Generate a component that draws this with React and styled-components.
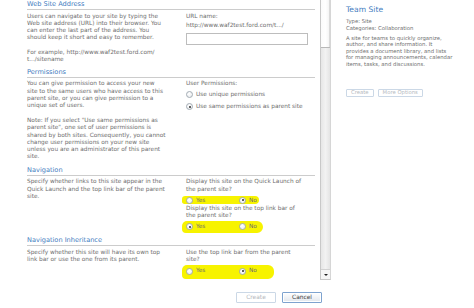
import React from "react";
import styled, { createGlobalStyle } from "styled-components";

const GlobalStyle = createGlobalStyle`
  html, body {
    margin: 0;
    padding: 0;
    background: #ffffff;
  }
  body {
    font-family: "DejaVu Sans", Verdana, sans-serif;
    color: #6e6e6e;
  }
`;

const Page = styled.div`
  width: 474px;
  height: 308px;
  overflow: hidden;
  display: flex;
  flex-direction: column;
`;

const Main = styled.div`
  display: flex;
  height: 280px;
`;

const FormPane = styled.div`
  width: 288px;
  padding: 0 5px 0 27px;
  overflow: hidden;
`;

const Section = styled.div`
  margin-bottom: ${(p) => p.$after || 4}px;
`;

const SectionTitle = styled.div`
  font-size: 6.6px;
  line-height: 9px;
  color: #3f7cc0;
  border-bottom: 1px solid #cccccc;
  margin-bottom: 2.5px;
`;

const SectionBody = styled.div`
  display: grid;
  grid-template-columns: 149px 1fr;
  column-gap: 10px;
`;

const Desc = styled.div`
  font-size: 5.8px;
  line-height: 7.3px;
  white-space: nowrap;

  p {
    margin: 0 0 7.5px;
  }
  p:last-child {
    margin: 0;
  }
`;

const Controls = styled.div`
  font-size: 5.8px;
  line-height: 7.3px;
  white-space: nowrap;
`;

const Label = styled.div`
  margin-top: ${(p) => p.$top || 0}px;
`;

const UrlInput = styled.div`
  margin-top: 4px;
  width: 120px;
  height: 10px;
  border: 1px solid #bdbdbd;
  background: #fff;
`;

const RadioRow = styled.div`
  position: relative;
  display: flex;
  align-items: center;
  height: ${(p) => p.$h || 9}px;
  margin-top: ${(p) => p.$top || 3}px;
`;

const Marker = styled.span`
  position: absolute;
  left: -4px;
  width: ${(p) => p.$w}px;
  top: ${(p) => p.$t}px;
  bottom: ${(p) => p.$b}px;
  background: #f7f300;
  border-radius: 5px 6px 6px 4px;
  filter: blur(0.4px);
`;

const Option = styled.label`
  position: relative;
  display: flex;
  align-items: center;
  gap: 3px;
  width: ${(p) => (p.$w ? `${p.$w}px` : "auto")};
`;

const Radio = styled.span`
  width: 5px;
  height: 5px;
  border-radius: 50%;
  border: 1px solid #a3acb4;
  background: radial-gradient(circle at 40% 35%, #ffffff 0%, #e6e9ec 100%);
  display: flex;
  align-items: center;
  justify-content: center;

  &::after {
    content: "";
    width: 2px;
    height: 2px;
    border-radius: 50%;
    background: ${(p) => (p.$on ? "#2b2b2b" : "transparent")};
  }
`;

const Scrollbar = styled.div`
  width: 11px;
  height: 280px;
  border-left: 1px solid #c8c8c8;
  border-right: 1px solid #d6d6d6;
  border-bottom: 1px solid #c8c8c8;
  background: linear-gradient(to right, #e6e6e6, #f2f2f2 50%, #e4e4e4);
  display: flex;
  flex-direction: column;
  justify-content: space-between;
  box-sizing: border-box;
`;

const Thumb = styled.div`
  height: 47px;
  background: linear-gradient(to right, #fbfbfb, #ffffff 50%, #f2f2f2);
  border-bottom: 1px solid #b8b8b8;
  box-shadow: inset -1px 0 0 #dadada;
`;

const ArrowButton = styled.div`
  height: 9px;
  border-top: 1px solid #d2d2d2;
  background: #f6f6f6;
  display: flex;
  align-items: center;
  justify-content: center;

  &::after {
    content: "";
    border-left: 2px solid transparent;
    border-right: 2px solid transparent;
    border-top: 2px solid #222;
  }
`;

const SidePanel = styled.div`
  flex: 1;
  padding: 5px 0 0 15px;
  white-space: nowrap;
`;

const SideTitle = styled.div`
  font-size: 7.6px;
  line-height: 10px;
  color: #3f7cc0;
  margin-bottom: 3px;
`;

const SideText = styled.div`
  font-size: 5.3px;
  line-height: 6.5px;
  margin-bottom: 3.5px;
`;

const SideButtons = styled.div`
  display: flex;
  gap: 4px;
  margin-top: 22px;
`;

const Button = styled.button`
  font-family: "DejaVu Sans", Verdana, sans-serif;
  font-size: ${(p) => (p.$small ? 5.3 : 5.9)}px;
  height: ${(p) => (p.$small ? 8 : 11)}px;
  padding: 0 ${(p) => (p.$small ? 4 : 0)}px;
  width: ${(p) => (p.$w ? `${p.$w}px` : "auto")};
  line-height: 1;
  border-radius: 1px;
  color: ${(p) => (p.disabled ? "#b4b8bd" : "#3d3d3d")};
  border: 1px solid ${(p) => (p.disabled ? "#cbd8e6" : "#7ea3cf")};
  background: ${(p) =>
    p.disabled
      ? "#ffffff"
      : "linear-gradient(to bottom, #ffffff, #eef1f5 55%, #e1e6ec)"};
  box-shadow: ${(p) => (p.disabled ? "none" : "inset 0 0 0 1px #ffffff")};
`;

const Footer = styled.div`
  display: flex;
  justify-content: flex-end;
  gap: 6px;
  padding: 12px 152px 0 0;
`;

const YesNo = ({ yes, w, t, b, top }) => (
  <RadioRow $top={top}>
    <Marker $w={w} $t={t} $b={b} />
    <Option $w={53}>
      <Radio $on={yes} />
      Yes
    </Option>
    <Option>
      <Radio $on={!yes} />
      No
    </Option>
  </RadioRow>
);

export default function App() {
  return (
    <Page>
      <GlobalStyle />
      <Main>
        <FormPane>
          <Section $after={4}>
            <SectionTitle>Web Site Address</SectionTitle>
            <SectionBody>
              <Desc>
                <p>
                  Users can navigate to your site by typing the
                  <br />
                  Web site address (URL) into their browser. You
                  <br />
                  can enter the last part of the address. You
                  <br />
                  should keep it short and easy to remember.
                </p>
                <p>
                  For example, http://www.waf2test.ford.com/
                  <br />
                  t.../sitename
                </p>
              </Desc>
              <Controls>
                <Label>URL name:</Label>
                <Label $top={2}>http://www.waf2test.ford.com/t.../</Label>
                <UrlInput />
              </Controls>
            </SectionBody>
          </Section>

          <Section $after={5}>
            <SectionTitle>Permissions</SectionTitle>
            <SectionBody>
              <Desc>
                <p>
                  You can give permission to access your new
                  <br />
                  site to the same users who have access to this
                  <br />
                  parent site, or you can give permission to a
                  <br />
                  unique set of users.
                </p>
                <p>
                  Note: If you select "Use same permissions as
                  <br />
                  parent site", one set of user permissions is
                  <br />
                  shared by both sites. Consequently, you cannot
                  <br />
                  change user permissions on your new site
                  <br />
                  unless you are an administrator of this parent
                  <br />
                  site.
                </p>
              </Desc>
              <Controls>
                <Label>User Permissions:</Label>
                <RadioRow $h={10} $top={2}>
                  <Option>
                    <Radio />
                    Use unique permissions
                  </Option>
                </RadioRow>
                <RadioRow $h={10} $top={2}>
                  <Option>
                    <Radio $on />
                    Use same permissions as parent site
                  </Option>
                </RadioRow>
              </Controls>
            </SectionBody>
          </Section>

          <Section $after={5}>
            <SectionTitle>Navigation</SectionTitle>
            <SectionBody>
              <Desc>
                <p>
                  Specify whether links to this site appear in the
                  <br />
                  Quick Launch and the top link bar of the parent
                  <br />
                  site.
                </p>
              </Desc>
              <Controls>
                <Label>
                  Display this site on the Quick Launch of
                  <br />
                  the parent site?
                </Label>
                <YesNo yes={false} w={77} t={0} b={1} />
                <Label>
                  Display this site on the top link bar of
                  <br />
                  the parent site?
                </Label>
                <YesNo yes w={81} t={-1} b={-2} />
              </Controls>
            </SectionBody>
          </Section>

          <Section>
            <SectionTitle>Navigation Inheritance</SectionTitle>
            <SectionBody>
              <Desc>
                <p>
                  Specify whether this site will have its own top
                  <br />
                  link bar or use the one from its parent.
                </p>
              </Desc>
              <Controls>
                <Label>
                  Use the top link bar from the parent
                  <br />
                  site?
                </Label>
                <YesNo yes={false} w={92} t={-2} b={-3} />
              </Controls>
            </SectionBody>
          </Section>
        </FormPane>

        <Scrollbar>
          <Thumb />
          <ArrowButton />
        </Scrollbar>

        <SidePanel>
          <SideTitle>Team Site</SideTitle>
          <SideText>
            Type: Site
            <br />
            Categories: Collaboration
          </SideText>
          <SideText>
            A site for teams to quickly organize,
            <br />
            author, and share information. It
            <br />
            provides a document library, and lists
            <br />
            for managing announcements, calendar
            <br />
            items, tasks, and discussions.
          </SideText>
          <SideButtons>
            <Button $small disabled>
              Create
            </Button>
            <Button $small disabled>
              More Options
            </Button>
          </SideButtons>
        </SidePanel>
      </Main>

      <Footer>
        <Button $w={40} disabled>
          Create
        </Button>
        <Button $w={40}>Cancel</Button>
      </Footer>
    </Page>
  );
}
